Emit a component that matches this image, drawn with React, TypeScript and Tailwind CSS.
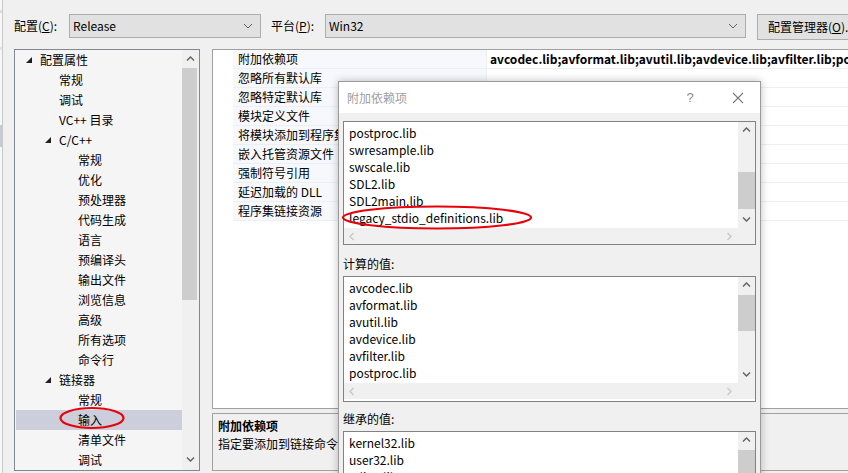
import React from "react";

const FONT = "font-['Noto_Sans_CJK_SC','Noto_Sans',sans-serif]";

function Tri() {
  return (
    <svg width="6" height="6" viewBox="0 0 6 6" className="block">
      <path d="M6 0V6H0Z" fill="#1e1e1e" />
    </svg>
  );
}

function Chev({ dir, color = "#606060" }: { dir: "up" | "down" | "left" | "right"; color?: string }) {
  const d =
    dir === "up"
      ? "M1 5.5L4.5 2L8 5.5"
      : dir === "down"
      ? "M1 2.5L4.5 6L8 2.5"
      : dir === "left"
      ? "M5.5 1L2 4.5L5.5 8"
      : "M2.5 1L6 4.5L2.5 8";
  return (
    <svg width="9" height="9" viewBox="0 0 9 9" className="block">
      <path d={d} stroke={color} strokeWidth="1.4" fill="none" />
    </svg>
  );
}

function SelectBox({ value, className }: { value: string; className: string }) {
  return (
    <div
      className={`shrink-0 h-[24px] bg-[#e1e1e1] border border-[#adadad] flex items-center justify-between pl-[3px] pr-[7px] text-[12px] text-black ${className}`}
    >
      <span>{value}</span>
      <svg width="10" height="6" viewBox="0 0 10 6" className="block">
        <path d="M1 1L5 5L9 1" stroke="#606060" strokeWidth="1" fill="none" />
      </svg>
    </div>
  );
}

type TreeItem = { t: string; lvl: number; exp?: boolean; sel?: boolean };

const tree: TreeItem[] = [
  { t: "配置属性", lvl: 0, exp: true },
  { t: "常规", lvl: 1 },
  { t: "调试", lvl: 1 },
  { t: "VC++ 目录", lvl: 1 },
  { t: "C/C++", lvl: 1, exp: true },
  { t: "常规", lvl: 2 },
  { t: "优化", lvl: 2 },
  { t: "预处理器", lvl: 2 },
  { t: "代码生成", lvl: 2 },
  { t: "语言", lvl: 2 },
  { t: "预编译头", lvl: 2 },
  { t: "输出文件", lvl: 2 },
  { t: "浏览信息", lvl: 2 },
  { t: "高级", lvl: 2 },
  { t: "所有选项", lvl: 2 },
  { t: "命令行", lvl: 2 },
  { t: "链接器", lvl: 1, exp: true },
  { t: "常规", lvl: 2 },
  { t: "输入", lvl: 2, sel: true },
  { t: "清单文件", lvl: 2 },
  { t: "调试", lvl: 2 },
];

const props = [
  "附加依赖项",
  "忽略所有默认库",
  "忽略特定默认库",
  "模块定义文件",
  "将模块添加到程序集",
  "嵌入托管资源文件",
  "强制符号引用",
  "延迟加载的 DLL",
  "程序集链接资源",
];

function ListBox({
  items,
  thumbTop,
  thumbH,
  height,
}: {
  items: string[];
  thumbTop: number;
  thumbH: number;
  height: string;
}) {
  return (
    <div className={`border border-[#828282] bg-white flex flex-col ${height} overflow-hidden shrink-0`}>
      <div className="flex h-[106px] shrink-0">
        <div className="flex-1 pt-[2px] pl-[5px] text-[12px] leading-[17px] text-black overflow-hidden">
          {items.map((s, i) => (
            <div key={i} className="h-[17px] whitespace-nowrap">
              {s}
            </div>
          ))}
        </div>
        <div className="w-[17px] bg-[#f0f0f0] relative">
          <div className="h-[17px] flex items-center justify-center">
            <Chev dir="up" />
          </div>
          <div
            className="absolute left-0 w-[17px] bg-[#cdcdcd]"
            style={{ top: thumbTop, height: thumbH }}
          />
          <div className="absolute bottom-0 left-0 h-[17px] w-[17px] flex items-center justify-center">
            <Chev dir="down" />
          </div>
        </div>
      </div>
      <div className="h-[16px] bg-[#f0f0f0] flex items-center shrink-0">
        <div className="w-[17px] flex justify-center">
          <Chev dir="left" color="#c8c8c8" />
        </div>
        <div className="flex-1" />
        <div className="w-[17px] flex justify-center">
          <Chev dir="right" color="#c8c8c8" />
        </div>
        <div className="w-[17px]" />
      </div>
    </div>
  );
}

export default function App() {
  return (
    <div className={`relative w-[848px] h-[473px] overflow-hidden bg-[#f0f0f0] text-black ${FONT}`}>
      {/* edge of window behind */}
      <div className="absolute left-0 top-0 w-[3px] h-full bg-[#f7f7f7] border-r border-[#c9c9c9]">
        <div className="mt-[10px] h-[3px] bg-[#d8dde8]" />
        <div className="mt-[34px] h-[3px] bg-[#e3e3e3]" />
        <div className="mt-[75px] h-[22px] bg-[#c5cad6]" />
      </div>

      {/* top bar */}
      <div className="flex items-center pt-[14px] pl-[14px] h-[38px] text-[12px] w-[900px]">
        <span className="w-[55px] shrink-0">
          配置(<span className="underline">C</span>):
        </span>
        <SelectBox value="Release" className="w-[192px]" />
        <span className="ml-[10px] w-[54px] shrink-0">
          平台(<span className="underline">P</span>):
        </span>
        <SelectBox value="Win32" className="w-[421px]" />
        <div className="shrink-0 ml-[11px] h-[26px] mt-[2px] w-[110px] bg-[#e1e1e1] border border-[#adadad] flex items-center pl-[10px] whitespace-nowrap">
          配置管理器(<span className="underline">O</span>)...
        </div>
      </div>

      {/* main */}
      <div className="flex pl-[14px] mt-[11px] gap-[12px]">
        {/* tree */}
        <div className="w-[186px] h-[422px] border border-[#828790] bg-[#f5f5f5] flex overflow-hidden shrink-0">
          <div className="flex-1 pl-[1px] text-[12px]">
            {tree.map((it, i) => (
              <div
                key={i}
                className={`h-[20px] flex items-center ${it.sel ? "bg-[#cccedb]" : ""}`}
              >
                <div style={{ width: 10 + it.lvl * 19 }} className="shrink-0" />
                <div className="w-[14px] shrink-0 flex items-center">{it.exp ? <Tri /> : null}</div>
                <span className="whitespace-nowrap">{it.t}</span>
              </div>
            ))}
          </div>
          <div className="w-[17px] relative bg-[#f0f0f0]">
            <div className="h-[18px] flex items-center justify-center">
              <Chev dir="up" />
            </div>
            <div className="absolute left-0 top-[18px] w-[15px] h-[232px] bg-[#cdcdcd]" />
            <div className="absolute bottom-[2px] left-0 w-[17px] h-[17px] flex items-center justify-center">
              <Chev dir="down" />
            </div>
          </div>
        </div>

        {/* right side */}
        <div className="w-[660px] shrink-0 flex flex-col gap-[4px]">
          <div className="h-[360px] border border-[#a0a0a0] bg-white flex flex-col">
            {props.map((p, i) => (
              <div key={i} className="h-[19px] flex text-[12px]">
                <div className="w-[20px] shrink-0 bg-white" />
                <div className="w-[253px] shrink-0 bg-[#f6f8fc] border-b border-[#eceff5] pl-[5px] flex items-center whitespace-nowrap">
                  {p}
                </div>
                <div className="flex-1 border-l border-b border-[#eceff5] pl-[3px] flex items-center whitespace-nowrap font-bold">
                  {i === 0 ? "avcodec.lib;avformat.lib;avutil.lib;avdevice.lib;avfilter.lib;postproc.lib" : ""}
                </div>
              </div>
            ))}
          </div>
          <div className="h-[58px] border border-[#a0a0a0] bg-[#f0f0f0] pl-[5px] pt-[3px] text-[12px] leading-[18px]">
            <div className="font-bold">附加依赖项</div>
            <div>指定要添加到链接命令行的附加项。[例如 kernel32.lib]</div>
          </div>
        </div>
      </div>

      {/* red annotation around 输入 */}
      <svg className="absolute left-[58px] top-[405px]" width="70" height="26" viewBox="0 0 70 26">
        <ellipse cx="34" cy="13" rx="31.5" ry="10" stroke="#e8000b" strokeWidth="2.2" fill="none" />
      </svg>

      {/* dialog */}
      <div className="absolute left-[338px] top-[81px] w-[423px] h-[400px] border border-[#9a9a9a] bg-[#f0f0f0] shadow-[0_0_8px_rgba(0,0,0,0.25)] flex flex-col">
        <div className="h-[31px] bg-white flex items-center pl-[8px] text-[12px] text-[#a0a0a0] shrink-0">
          <span className="flex-1">附加依赖项</span>
          <span className="w-[20px] text-[13px] text-[#8a8a8a] font-['Liberation_Sans',sans-serif] mr-[32px] text-center">?</span>
          <svg width="12" height="12" viewBox="0 0 12 12" className="mr-[16px]">
            <path d="M1 1L11 11M11 1L1 11" stroke="#7a7a7a" strokeWidth="1.1" />
          </svg>
        </div>
        <div className="px-[4px] pt-[8px] flex flex-col">
          <ListBox
            height="h-[124px]"
            items={["postproc.lib", "swresample.lib", "swscale.lib", "SDL2.lib", "SDL2main.lib", "legacy_stdio_definitions.lib"]}
            thumbTop={50}
            thumbH={37}
          />
          <div className="h-[31px] flex items-end pb-[4px] text-[12px] leading-[16px]">计算的值:</div>
          <ListBox
            height="h-[126px]"
            items={["avcodec.lib", "avformat.lib", "avutil.lib", "avdevice.lib", "avfilter.lib", "postproc.lib"]}
            thumbTop={18}
            thumbH={36}
          />
          <div className="h-[29px] flex items-end pb-[4px] text-[12px] leading-[16px]">继承的值:</div>
          <ListBox
            height="h-[126px]"
            items={["kernel32.lib", "user32.lib", "gdi32.lib", "winspool.lib", "comdlg32.lib", "advapi32.lib"]}
            thumbTop={18}
            thumbH={60}
          />
        </div>
      </div>

      {/* red annotation around legacy_stdio_definitions.lib */}
      <svg className="absolute left-[340px] top-[203px]" width="196" height="29" viewBox="0 0 196 29">
        <ellipse cx="97" cy="14.5" rx="94" ry="11" stroke="#e8000b" strokeWidth="2.2" fill="none" />
      </svg>
    </div>
  );
}
